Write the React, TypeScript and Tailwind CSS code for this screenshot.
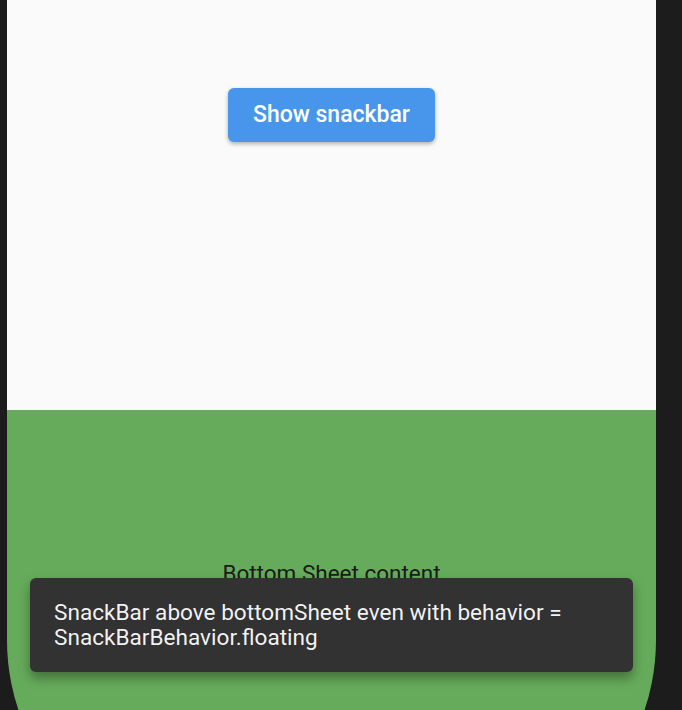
import React from 'react';

const font = { fontFamily: 'Roboto, "Noto Sans", sans-serif' };

const SnackBar: React.FC<{ message: string }> = ({ message }) => (
  <div className="absolute left-[23px] top-[578px] w-[603px] h-[94px] rounded-[6px] bg-[#323232] shadow-[0_6px_12px_rgba(0,0,0,0.35)] flex items-center px-6">
    <p className="text-[22.6px] leading-[25px] text-white/95">{message}</p>
  </div>
);

export default function App() {
  return (
    <div className="h-[710px] w-full overflow-hidden bg-[#1c1c1c] pl-[7px]" style={font}>
      <div className="relative w-[649px] h-[860px] rounded-b-[220px] overflow-hidden flex flex-col">
        {/* page body */}
        <div className="h-[410px] bg-[#fafafa] flex justify-center pt-[88px]">
          <button className="h-[54px] w-[207px] rounded-[6px] bg-[#4796eb] text-white text-[23px] font-medium shadow-[0_2px_4px_rgba(0,0,0,0.3)]">
            Show snackbar
          </button>
        </div>

        {/* bottom sheet */}
        <div className="flex-1 bg-[#66ab5b] flex justify-center pt-[148px]">
          <span className="text-[22.5px] leading-[30px] text-[#1a1a1a]">Bottom Sheet content</span>
        </div>

        <SnackBar message="SnackBar above bottomSheet even with behavior = SnackBarBehavior.floating" />
      </div>
    </div>
  );
}
